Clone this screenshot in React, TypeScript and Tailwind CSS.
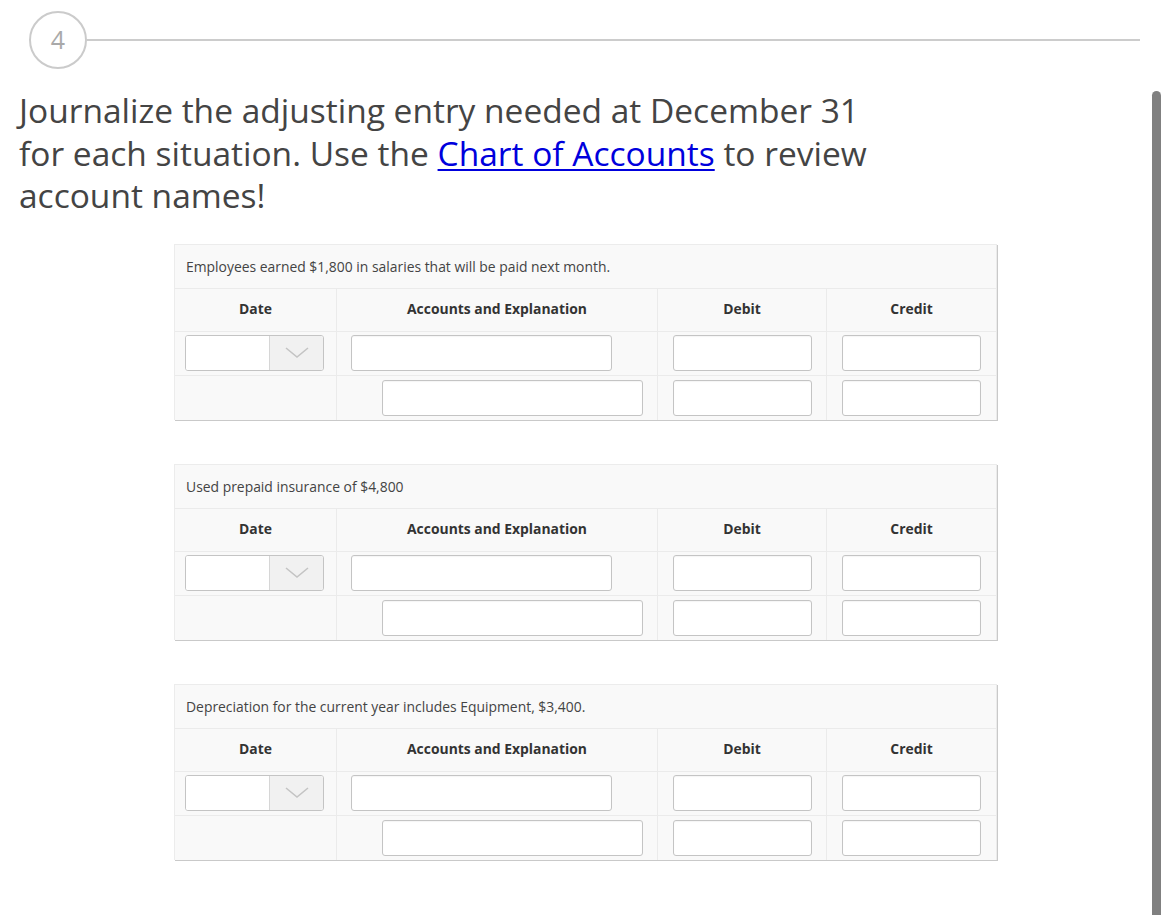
import React from "react";

const entries = [
  "Employees earned $1,800 in salaries that will be paid next month.",
  "Used prepaid insurance of $4,800",
  "Depreciation for the current year includes Equipment, $3,400.",
];

function TextBox({ className = "" }: { className?: string }) {
  return (
    <div
      className={`h-[36px] bg-white border border-[#c4c4c4] rounded-[3px] shadow-[inset_0_1px_1px_rgba(0,0,0,0.04)] ${className}`}
    />
  );
}

function DateSelect() {
  return (
    <div className="flex h-[36px] w-[139px] bg-white border border-[#c4c4c4] rounded-[3px] overflow-hidden">
      <div className="flex-1 bg-white" />
      <div className="w-[54px] flex items-center justify-center bg-[#f1f1f1] border-l border-[#d6d6d6]">
        <svg width="24" height="12" viewBox="0 0 24 12" fill="none">
          <polyline points="1,1 12,10 23,1" stroke="#c4c4c4" strokeWidth="1.6" />
        </svg>
      </div>
    </div>
  );
}

function JournalTable({ title }: { title: string }) {
  const cell = "border-r border-b border-[#ebebeb] flex items-center";
  return (
    <div className="w-[823px] bg-[#f9f9f9] border-t border-l border-[#ececec] shadow-[1px_1px_0_#c9c9c9]">
      <div className="h-[44px] flex items-center pt-[2px] px-[11px] border-r border-b border-[#ebebeb] text-[13.9px] text-[#444]">
        {title}
      </div>
      <div className="grid grid-cols-[162px_321px_169px_170px] text-[13.9px] font-bold text-[#333]">
        <div className={`${cell} h-[43px] justify-center`}>Date</div>
        <div className={`${cell} h-[43px] justify-center`}>Accounts and Explanation</div>
        <div className={`${cell} h-[43px] justify-center`}>Debit</div>
        <div className={`${cell} h-[43px] justify-center`}>Credit</div>

        <div className={`${cell} h-[44px] pl-[10px]`}>
          <DateSelect />
        </div>
        <div className={`${cell} h-[44px] pl-[14px]`}>
          <TextBox className="w-[261px]" />
        </div>
        <div className={`${cell} h-[44px] pl-[15px]`}>
          <TextBox className="w-[139px]" />
        </div>
        <div className={`${cell} h-[44px] pl-[15px]`}>
          <TextBox className="w-[139px]" />
        </div>

        <div className={`${cell} h-[44px] border-b-0`} />
        <div className={`${cell} h-[44px] pl-[45px] border-b-0`}>
          <TextBox className="w-[261px]" />
        </div>
        <div className={`${cell} h-[44px] pl-[15px] border-b-0`}>
          <TextBox className="w-[139px]" />
        </div>
        <div className={`${cell} h-[44px] pl-[15px] border-b-0`}>
          <TextBox className="w-[139px]" />
        </div>
      </div>
    </div>
  );
}

export default function App() {
  return (
    <div className="h-[915px] overflow-hidden bg-white flex font-['Open_Sans',sans-serif]">
      <div className="flex-1">
        <div className="flex items-center pl-[29px] pr-[12px] pt-[11px]">
          <div className="w-[58px] h-[58px] rounded-full border-2 border-[#cbcbcb] flex items-center justify-center text-[25px] text-[#a9a9a9]">
            4
          </div>
          <div className="flex-1 h-[2px] bg-[#cccccc]" />
        </div>

        <h1 className="mt-[20px] pl-[19px] w-[890px] text-[33.5px] leading-[42.5px] text-[#444] font-normal">
          Journalize the adjusting entry needed at December 31 for each situation. Use the{" "}
          <a href="#" className="text-[#0000dd] underline underline-offset-[3px] decoration-[2px]">
            Chart of Accounts
          </a>{" "}
          to review account names!
        </h1>

        <div className="mt-[27px] pl-[174px] flex flex-col gap-[44px]">
          {entries.map((t) => (
            <JournalTable key={t} title={t} />
          ))}
        </div>
      </div>
      <div className="w-[18px] flex pt-[91px]">
        <div className="w-[9px] h-full bg-[#808080] rounded-t-full" />
      </div>
    </div>
  );
}
